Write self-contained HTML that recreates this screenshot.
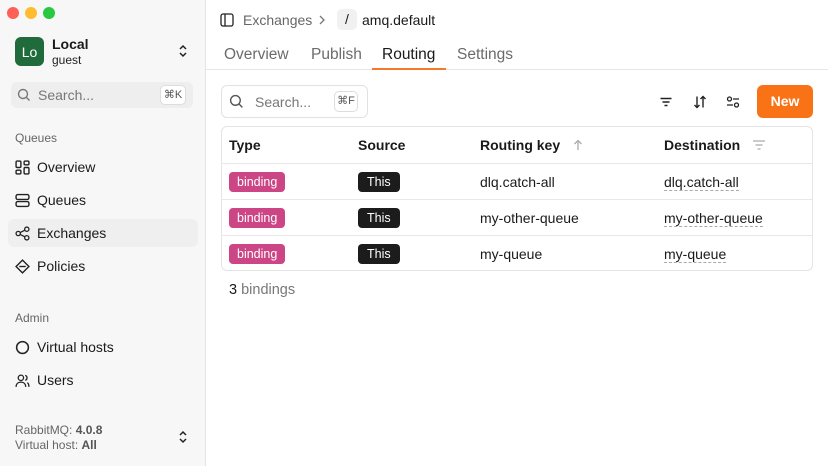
<!DOCTYPE html>
<html><head><meta charset="utf-8"><style>
*{box-sizing:border-box;margin:0;padding:0}
body{width:828px;height:466px;overflow:hidden;font-family:"Liberation Sans",Arial,sans-serif;background:#fff;color:#1a1a1a;position:relative;font-size:14px}
.abs{position:absolute}
.side{left:0;top:0;width:206px;height:466px;background:#f7f7f7;border-right:1px solid #e4e4e4}
.dot{width:12px;height:12px;border-radius:50%;top:7px}
.nav{left:8px;width:190px;height:28px;border-radius:6px;display:flex;align-items:center;padding-left:7px;font-size:14px}
.nav svg{margin-right:7px}
.lbl{left:15px;font-size:12px;color:#666}
.tab{top:46px;font-size:15.5px;color:#6b6b6b}
.row{left:221px;width:592px;height:36px;border-top:1px solid #e8e8e8}
.cell{position:absolute;top:0;height:36px;display:flex;align-items:center;font-size:14px}
.bind{background:#cc4584;color:#fff;font-size:12.5px;border-radius:4px;padding:0 8px;height:20px;line-height:20px}
.this{background:#1c1c1c;color:#fff;font-size:12.5px;border-radius:4px;padding:0 9px;height:20px;line-height:20px}
.dash{border-bottom:1px dashed #aaa;line-height:16px}
</style></head><body>
<div class="abs side"></div>
<div class="abs dot" style="left:7px;background:#fe5f57"></div>
<div class="abs dot" style="left:25px;background:#febc2e"></div>
<div class="abs dot" style="left:43px;background:#28c840"></div>
<div class="abs" style="left:15px;top:37px;width:29px;height:29px;border-radius:6px;background:#1f6b3b;color:#fff;font-size:14px;display:flex;align-items:center;justify-content:center">Lo</div>
<div class="abs" style="left:52px;top:36px;font-weight:bold;font-size:14px">Local</div>
<div class="abs" style="left:52px;top:53px;font-size:12px;color:#222">guest</div>
<svg class="abs" style="left:177px;top:44px" width="12" height="14" viewBox="0 0 12 14" fill="none" stroke="#222" stroke-width="1.5"><path d="M3 5l3-3 3 3M3 9l3 3 3-3"/></svg>
<div class="abs" style="left:11px;top:82px;width:182px;height:26px;background:#eeeeee;border-radius:6px"></div>
<svg class="abs" style="left:17px;top:88px" width="14" height="14" viewBox="0 0 14 14" fill="none" stroke="#777" stroke-width="1.4"><circle cx="6" cy="6" r="4.5"/><path d="M9.5 9.5l3 3"/></svg>
<div class="abs" style="left:38px;top:87px;color:#777;font-size:14px">Search...</div>
<div class="abs" style="left:160px;top:85px;width:26px;height:20px;background:#fff;border:1px solid #ddd;border-radius:5px;font-size:11px;color:#555;text-align:center;line-height:18px">⌘K</div>
<div class="abs lbl" style="top:131px">Queues</div>
<div class="abs nav" style="top:153px"><svg width="15" height="15" viewBox="0 0 14 14" fill="none" stroke="#222" stroke-width="1.3"><rect x="1" y="1" width="4.5" height="6" rx="1"/><rect x="8.5" y="1" width="4.5" height="3.5" rx="1"/><rect x="1" y="9.5" width="4.5" height="3.5" rx="1"/><rect x="8.5" y="7" width="4.5" height="6" rx="1"/></svg>Overview</div>
<div class="abs nav" style="top:186px"><svg width="15" height="15" viewBox="0 0 14 14" fill="none" stroke="#222" stroke-width="1.3"><rect x="1" y="1.5" width="12" height="4.5" rx="1.5"/><rect x="1" y="8" width="12" height="4.5" rx="1.5"/></svg>Queues</div>
<div class="abs nav" style="top:219px;background:#efefef"><svg width="15" height="15" viewBox="0 0 14 14" fill="none" stroke="#222" stroke-width="1.2"><circle cx="3" cy="7" r="2"/><circle cx="11" cy="3" r="2"/><circle cx="11" cy="11" r="2"/><path d="M5 6l4-2M5 8l4 2"/></svg>Exchanges</div>
<div class="abs nav" style="top:252px"><svg width="15" height="15" viewBox="0 0 14 14" fill="none" stroke="#222" stroke-width="1.3"><path d="M7 1l6 6-6 6-6-6z"/><path d="M4 7h6"/></svg>Policies</div>
<div class="abs lbl" style="top:311px">Admin</div>
<div class="abs nav" style="top:333px"><svg width="15" height="15" viewBox="0 0 14 14" fill="none" stroke="#222" stroke-width="1.4"><circle cx="7" cy="7" r="5.5"/></svg>Virtual hosts</div>
<div class="abs nav" style="top:366px"><svg width="15" height="15" viewBox="0 0 14 14" fill="none" stroke="#222" stroke-width="1.2"><circle cx="5.5" cy="4.5" r="2.5"/><path d="M1 13c0-3 2-4.5 4.5-4.5S10 10 10 13M9.5 2.2a2.4 2.4 0 010 4.6M11.5 9c1 .6 1.5 2 1.5 4"/></svg>Users</div>
<div class="abs" style="left:15px;top:423px;font-size:12px;color:#666">RabbitMQ: <b style="color:#555">4.0.8</b></div>
<div class="abs" style="left:15px;top:438px;font-size:12px;color:#666">Virtual host: <b style="color:#555">All</b></div>
<svg class="abs" style="left:177px;top:430px" width="12" height="14" viewBox="0 0 12 14" fill="none" stroke="#222" stroke-width="1.5"><path d="M3 5l3-3 3 3M3 9l3 3 3-3"/></svg>

<svg class="abs" style="left:220px;top:13px" width="14" height="14" viewBox="0 0 14 14" fill="none" stroke="#222" stroke-width="1.3"><rect x="1" y="1" width="12" height="12" rx="2"/><path d="M5 1v12"/></svg>
<div class="abs" style="left:243px;top:12px;color:#666;font-size:14px">Exchanges</div>
<svg class="abs" style="left:317px;top:14px" width="10" height="12" viewBox="0 0 10 12" fill="none" stroke="#777" stroke-width="1.3"><path d="M3 2l4 4-4 4"/></svg>
<div class="abs" style="left:337px;top:9px;width:20px;height:21px;background:#f1f1f1;border-radius:5px;text-align:center;line-height:21px;font-size:14px">/</div>
<div class="abs" style="left:362px;top:12px;font-size:14px">amq.default</div>
<div class="abs tab" style="left:224px">Overview</div>
<div class="abs tab" style="left:311px">Publish</div>
<div class="abs tab" style="left:382px;color:#1a1a1a">Routing</div>
<div class="abs tab" style="left:457px">Settings</div>
<div class="abs" style="left:206px;top:69px;width:622px;height:1px;background:#e6e6e6"></div>
<div class="abs" style="left:372px;top:68px;width:74px;height:2px;background:#f47a2a"></div>

<div class="abs" style="left:221px;top:85px;width:147px;height:33px;border:1px solid #e2e2e2;border-radius:6px"></div>
<svg class="abs" style="left:229px;top:94px" width="15" height="15" viewBox="0 0 14 14" fill="none" stroke="#555" stroke-width="1.3"><circle cx="6" cy="6" r="4.5"/><path d="M9.5 9.5l3 3"/></svg>
<div class="abs" style="left:255px;top:94px;color:#777;font-size:14px">Search...</div>
<div class="abs" style="left:334px;top:91px;width:24px;height:21px;border:1px solid #ddd;border-radius:5px;font-size:11px;color:#555;text-align:center;line-height:19px">⌘F</div>
<svg class="abs" style="left:659px;top:95px" width="14" height="14" viewBox="0 0 14 14" fill="none" stroke="#222" stroke-width="1.4"><path d="M1.5 3.5h11M3.5 7h7M5.5 10.5h3"/></svg>
<svg class="abs" style="left:693px;top:95px" width="14" height="14" viewBox="0 0 14 14" fill="none" stroke="#222" stroke-width="1.4"><path d="M4 1.5v11M1.5 10l2.5 2.5L6.5 10M10 12.5v-11M7.5 4L10 1.5 12.5 4"/></svg>
<svg class="abs" style="left:726px;top:95px" width="14" height="14" viewBox="0 0 14 14" fill="none" stroke="#222" stroke-width="1.3"><path d="M7 4h6M1 10h6"/><circle cx="3.5" cy="4" r="2"/><circle cx="10.5" cy="10" r="2"/></svg>
<div class="abs" style="left:757px;top:85px;width:56px;height:33px;background:#f97316;border-radius:6px;color:#fff;font-weight:bold;font-size:14px;text-align:center;line-height:33px">New</div>

<div class="abs" style="left:221px;top:126px;width:592px;height:145px;border:1px solid #e4e4e4;border-radius:6px"></div>
<div class="abs row" style="top:127px;border-top:none">
<div class="cell" style="left:8px;font-weight:bold">Type</div>
<div class="cell" style="left:137px;font-weight:bold">Source</div>
<div class="cell" style="left:259px;font-weight:bold">Routing key <svg style="margin-left:12px" width="12" height="12" viewBox="0 0 12 12" fill="none" stroke="#aaa" stroke-width="1.3"><path d="M6 11V1.5M2.5 5L6 1.5 9.5 5"/></svg></div>
<div class="cell" style="left:443px;font-weight:bold">Destination <svg style="margin-left:12px" width="14" height="12" viewBox="0 0 14 12" fill="none" stroke="#aaa" stroke-width="1.3"><path d="M1 2h12M3.5 6h7M5.5 10h3"/></svg></div>
</div>
<div class="abs row" style="top:163px">
<div class="cell" style="left:8px"><span class="bind">binding</span></div>
<div class="cell" style="left:137px"><span class="this">This</span></div>
<div class="cell" style="left:259px">dlq.catch-all</div>
<div class="cell" style="left:443px"><span class="dash">dlq.catch-all</span></div>
</div>
<div class="abs row" style="top:199px">
<div class="cell" style="left:8px"><span class="bind">binding</span></div>
<div class="cell" style="left:137px"><span class="this">This</span></div>
<div class="cell" style="left:259px">my-other-queue</div>
<div class="cell" style="left:443px"><span class="dash">my-other-queue</span></div>
</div>
<div class="abs row" style="top:235px">
<div class="cell" style="left:8px"><span class="bind">binding</span></div>
<div class="cell" style="left:137px"><span class="this">This</span></div>
<div class="cell" style="left:259px">my-queue</div>
<div class="cell" style="left:443px"><span class="dash">my-queue</span></div>
</div>
<div class="abs" style="left:229px;top:282px;font-size:14.5px;color:#777"><span style="color:#1a1a1a">3</span> bindings</div>
</body></html>
